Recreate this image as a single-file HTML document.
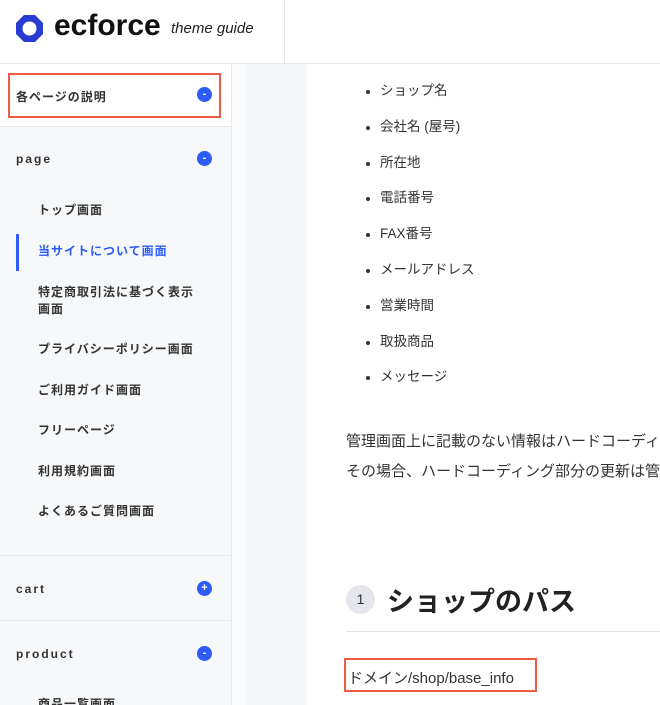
<!DOCTYPE html>
<html><head><meta charset="utf-8"><style>
*{margin:0;padding:0;box-sizing:border-box}
html,body{width:660px;height:705px;overflow:hidden}
body{background:#fff;font-family:"Liberation Sans","Noto Sans CJK JP",sans-serif;color:#222;position:relative}
.hdr{position:absolute;left:0;top:0;width:660px;height:64px;background:#fff;border-bottom:1px solid #e6e7ea}
.hdr .div{position:absolute;left:284px;top:0;width:1px;height:64px;background:#e6e7ea}
.side{position:absolute;left:0;top:64px;width:232px;height:641px;background:#f7f8fa;border-right:1px solid #e8e9ec;overflow:hidden}
.gut{position:absolute;left:232px;top:64px;width:14px;height:641px;background:#fafbfc}
.gray{position:absolute;left:246px;top:64px;width:61px;height:641px;background:#f5f6f8}
.sec{position:absolute;left:0;width:231px;border-bottom:1px solid #e9eaed}
.ttl{position:absolute;left:16px;font-size:12px;font-weight:bold;letter-spacing:2px;color:#333}
.btn{position:absolute;left:197px;width:15px;height:15px;border-radius:50%;background:#2d5cf6;color:#fff;font-size:11px;line-height:14px;text-align:center;font-weight:bold}
.it{position:absolute;left:38px;font-size:12px;font-weight:bold;color:#333;letter-spacing:1px;line-height:17px}
ul{position:absolute;left:366px;top:80px;list-style:none}
li{font-size:13.5px;color:#333;height:35.8px;line-height:22px;position:relative;padding-left:14px;white-space:nowrap}
li:before{content:"";position:absolute;left:0;top:10px;width:4px;height:4px;border-radius:50%;background:#333}
.p{position:absolute;left:346px;width:314px;overflow:hidden;font-size:15px;color:#333;white-space:nowrap}
</style></head><body>
<div class="hdr">
<svg style="position:absolute;left:15px;top:14px" width="29" height="29" viewBox="0 0 29 29"><polygon points="9,1 20,1 28,9 28,20 20,28 9,28 1,20 1,9" fill="#2a3bd1"/><circle cx="14.5" cy="14.5" r="7" fill="#fff"/></svg>
<div style="position:absolute;left:54px;top:9px;font-size:30px;font-weight:bold;color:#111">ecforce</div>
<div style="position:absolute;left:171px;top:20px;font-size:15px;font-style:italic;color:#222">theme guide</div>
<div class="div"></div>
</div>
<div class="side">
<div class="sec" style="top:0;height:63px;background:#fff"></div>
<div style="position:absolute;left:8px;top:9px;width:213px;height:45px;border:2px solid #ee5a44"></div>
<div class="ttl" style="top:24px;letter-spacing:1px">各ページの説明</div>
<div class="btn" style="top:23px">-</div>
<div class="sec" style="top:63px;height:429px"></div>
<div class="ttl" style="top:88px">page</div>
<div class="btn" style="top:87px">-</div>
<div class="it" style="top:138px">トップ画面</div>
<div style="position:absolute;left:16px;top:170px;width:3px;height:37px;background:#2d5cf6"></div>
<div class="it" style="top:179px;color:#2d5cf6">当サイトについて画面</div>
<div class="it" style="top:220px">特定商取引法に基づく表示<br>画面</div>
<div class="it" style="top:277px">プライバシーポリシー画面</div>
<div class="it" style="top:318px">ご利用ガイド画面</div>
<div class="it" style="top:358px">フリーページ</div>
<div class="it" style="top:399px">利用規約画面</div>
<div class="it" style="top:439px">よくあるご質問画面</div>
<div class="sec" style="top:492px;height:65px"></div>
<div class="ttl" style="top:518px">cart</div>
<div class="btn" style="top:517px">+</div>
<div class="ttl" style="top:583px">product</div>
<div class="btn" style="top:582px">-</div>
<div class="it" style="top:632px">商品一覧画面</div>
</div>
<div class="gut"></div>
<div class="gray"></div>
<ul>
<li>ショップ名</li><li>会社名 (屋号)</li><li>所在地</li><li>電話番号</li><li>FAX番号</li><li>メールアドレス</li><li>営業時間</li><li>取扱商品</li><li>メッセージ</li>
</ul>
<div class="p" style="top:430px">管理画面上に記載のない情報はハードコーディングで記述されています。</div>
<div class="p" style="top:460px">その場合、ハードコーディング部分の更新は管理画面からはできません。</div>
<div style="position:absolute;left:346px;top:585px;width:29px;height:29px;border-radius:50%;background:#e5e6eb;text-align:center;line-height:29px;font-size:14px;color:#333">1</div>
<div style="position:absolute;left:387px;top:580px;font-size:27px;font-weight:bold;color:#222">ショップのパス</div>
<div style="position:absolute;left:346px;top:631px;width:314px;height:1px;background:#e2e3e6"></div>
<div style="position:absolute;left:344px;top:658px;width:193px;height:34px;border:2px solid #ee5a44"></div>
<div class="p" style="top:667px;left:348px;width:185px">ドメイン/shop/base_info</div>
</body></html>
